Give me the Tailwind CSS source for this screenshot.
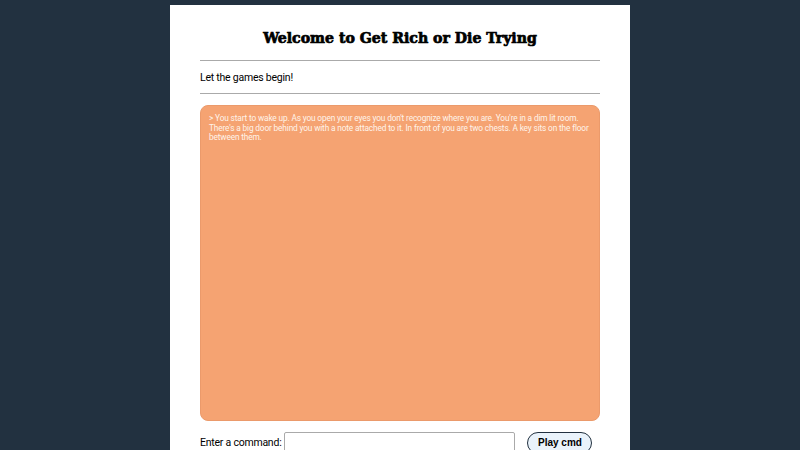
<!DOCTYPE html>
<html lang="en">
<head>
    <meta charset="UTF-8">
    <title>Get Rich or Die Trying</title>
    <script src="https://cdn.jsdelivr.net/npm/@tailwindcss/browser@4"></script>
</head>
<body class="bg-[#223140] font-['Roboto',sans-serif] text-black h-[450px] overflow-hidden">
    <div class="w-[460px] mx-auto mt-[5px] bg-white px-[30px] pt-[23px] h-[445px] overflow-hidden">
        <h1 class="text-center text-[15.7px] leading-[20px] font-['DejaVu_Serif_Condensed','DejaVu_Serif',serif] font-bold [-webkit-text-stroke:0.7px_black] pb-[12px] border-b border-[#aaa]">Welcome to Get Rich or Die Trying</h1>
        <p class="text-[10.5px] tracking-[-0.23px] leading-[12px] py-[11px] border-b border-[#aaa] h-[33px]">Let the games begin!</p>
        <div class="mt-[11px] h-[316px] bg-[#f5a372] border border-[#eb9a6b] rounded-[8px] px-2 py-2 text-[8.3px] tracking-[-0.15px] leading-[9.5px] text-[#fff4ea]">
            &gt; You start to wake up. As you open your eyes you don't recognize where you are. You're in a dim lit room. There's a big door behind you with a note attached to it. In front of you are two chests. A key sits on the floor between them.
        </div>
        <div class="flex items-start mt-[11px]">
            <label class="shrink-0 text-[10.5px] tracking-[-0.23px] leading-[12px] mt-[5px] mr-[3px]">Enter a command:</label>
            <input type="text" class="w-[231px] h-[22px] border border-[#aaa] rounded-[2px] bg-white">
            <button class="ml-[12px] w-[65px] h-[22px] rounded-[11px] border border-[#223140] bg-[#eaf3fb] font-['Liberation_Sans',sans-serif] font-bold text-[10px] leading-[20px]">Play cmd</button>
        </div>
    </div>
</body>
</html>
